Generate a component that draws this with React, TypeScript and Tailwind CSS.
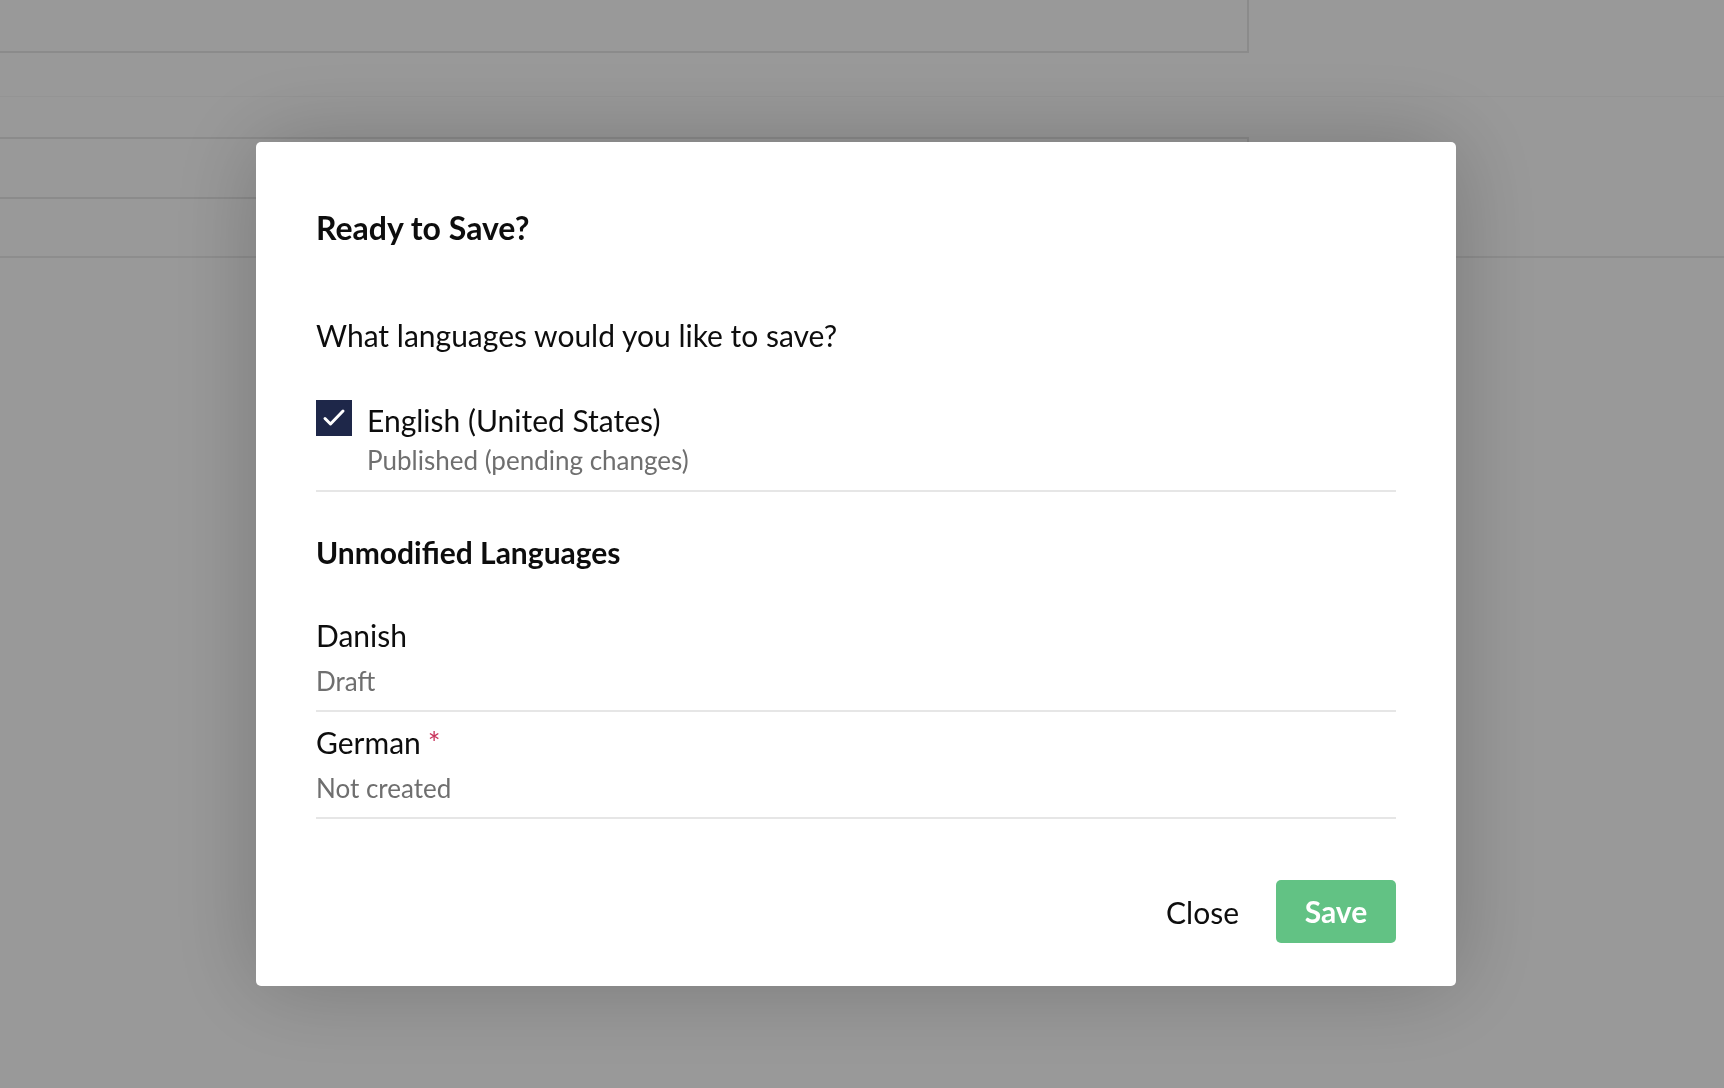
import React from 'react';

const languages = [
  { name: 'Danish', status: 'Draft', required: false },
  { name: 'German', status: 'Not created', required: true },
];

function PageBehind() {
  return (
    <div className="min-h-screen bg-white">
      <div className="w-[1249px] h-[53px] border-r-2 border-b-2 border-[#e8e8e8]" />
      <div className="h-[44px] border-b border-[#f7f7f7]" />
      <div className="h-[40px]" />
      <div className="w-[1249px] h-[62px] border-t-2 border-r-2 border-b-2 border-[#e8e8e8]" />
      <div className="h-[59px] border-b-2 border-[#ececec]" />
    </div>
  );
}

function Checkbox() {
  return (
    <div className="w-[36px] h-[36px] shrink-0 bg-[#1e2749]">
      <svg width="36" height="36" viewBox="0 0 36 36" fill="none">
        <path d="M9 18.5l5.5 5.5L27 11" stroke="#fff" strokeWidth="3" strokeLinecap="round" strokeLinejoin="round" />
      </svg>
    </div>
  );
}

export default function App() {
  return (
    <div className="relative min-h-screen font-['Lato','Noto_Sans',sans-serif]">
      <PageBehind />

      {/* overlay + dialog */}
      <div className="fixed inset-0 bg-black/40 flex items-start justify-center pt-[142px]">
        <div className="w-[1200px] mr-[12px] bg-white rounded-[5px] shadow-[0_0_90px_rgba(0,0,0,0.22)] pt-[66px] px-[60px] pb-[43px] text-[#0d0d0d]">
          <h2 className="text-[32px] leading-[40px] font-bold">Ready to Save?</h2>

          <p className="mt-[69px] text-[30px] leading-[36px]">What languages would you like to save?</p>

          <div className="mt-[47px] border-b-2 border-[#e6e6e6] pb-[14px]">
            <div className="flex items-start gap-[15px]">
              <Checkbox />
              <div className="mt-[2px]">
                <div className="text-[30px] leading-[36px]">English (United States)</div>
                <div className="mt-[6px] text-[26px] leading-[32px] text-[#6f6f6f]">Published (pending changes)</div>
              </div>
            </div>
          </div>

          <h3 className="mt-[41px] text-[30px] leading-[38px] font-bold">Unmodified Languages</h3>

          <div className="mt-[46px]">
            {languages.map((lang, idx) => (
              <div
                key={lang.name}
                className={
                  idx === 0
                    ? 'pb-[13px] border-b-2 border-[#e6e6e6]'
                    : 'pt-[12px] pb-[13px] border-b-2 border-[#e6e6e6]'
                }
              >
                <div className="text-[30px] leading-[36px]">
                  {lang.name}
                  {lang.required && <span className="ml-[7px] text-[#c9355d]">*</span>}
                </div>
                <div className="mt-[12px] text-[26px] leading-[32px] text-[#6f6f6f]">{lang.status}</div>
              </div>
            ))}
          </div>

          <div className="mt-[61px] flex items-center justify-end">
            <button className="text-[30px] leading-[36px] mr-[37px]">Close</button>
            <button className="w-[120px] h-[63px] rounded-[5px] bg-[#62c284] text-white text-[30px] font-bold">Save</button>
          </div>
        </div>
      </div>
    </div>
  );
}
